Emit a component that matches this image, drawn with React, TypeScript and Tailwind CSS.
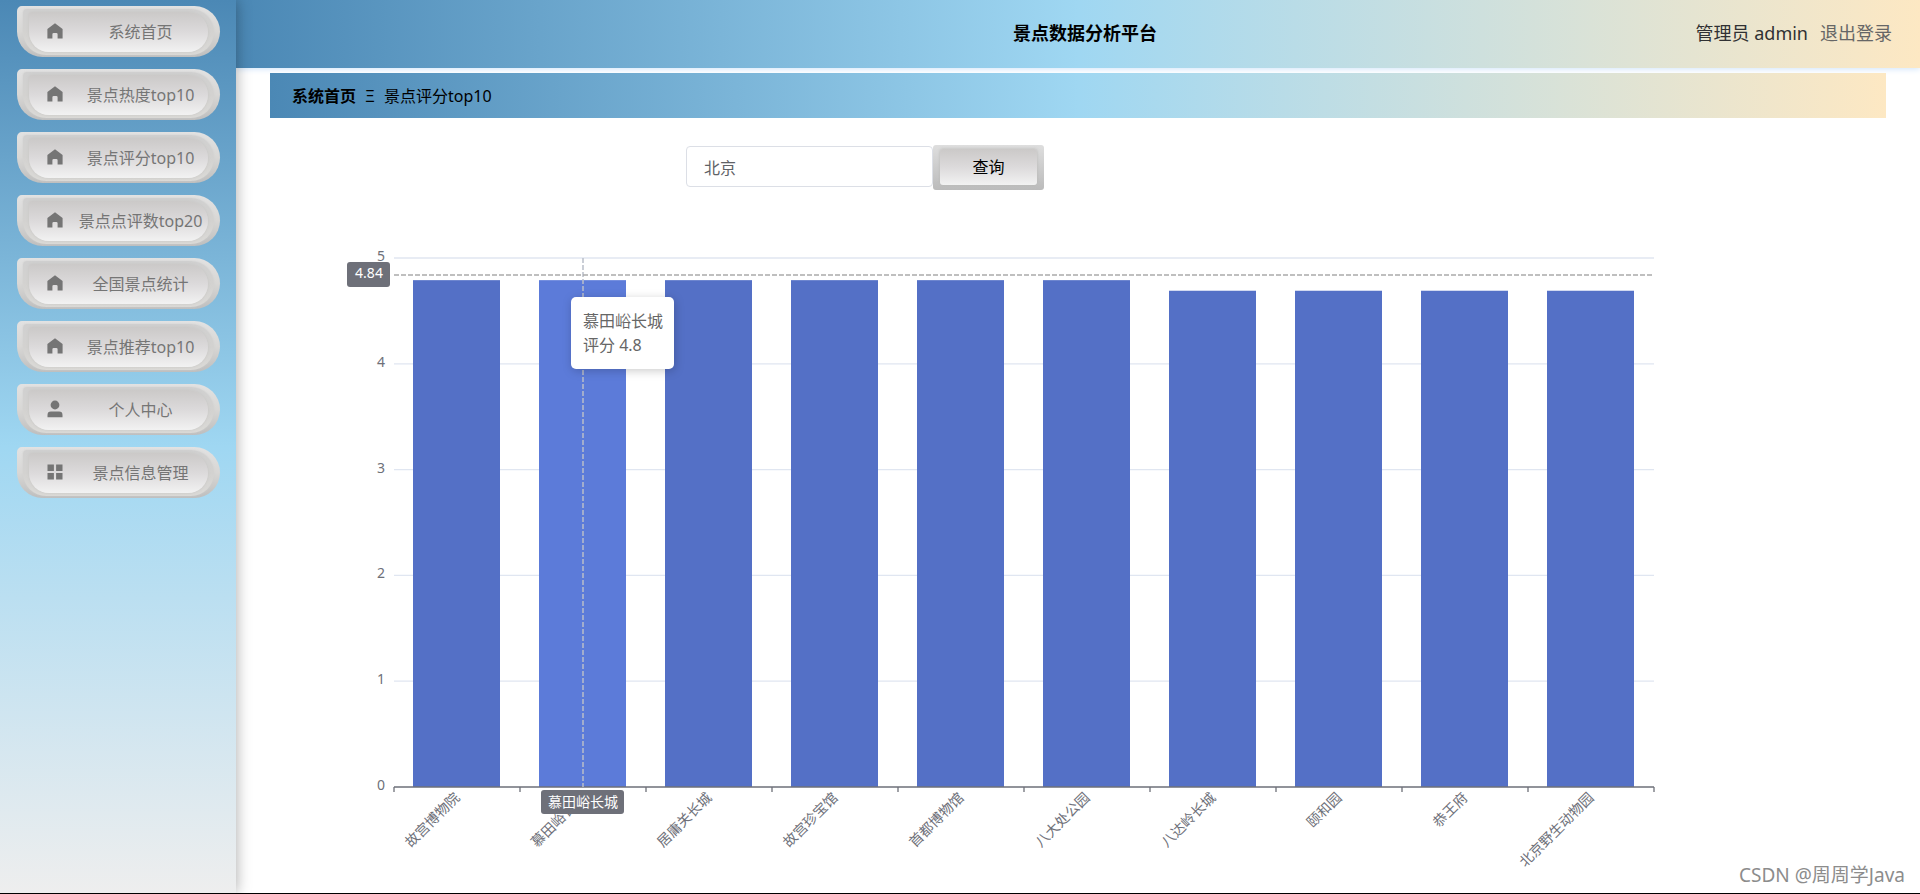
import type { ReactNode } from "react";

type IconName = "home" | "user" | "grid";

const menu: { label: string; icon: IconName }[] = [
  { label: "系统首页", icon: "home" },
  { label: "景点热度top10", icon: "home" },
  { label: "景点评分top10", icon: "home" },
  { label: "景点点评数top20", icon: "home" },
  { label: "全国景点统计", icon: "home" },
  { label: "景点推荐top10", icon: "home" },
  { label: "个人中心", icon: "user" },
  { label: "景点信息管理", icon: "grid" },
];

const spots = [
  { name: "故宫博物院", score: 4.8 },
  { name: "慕田峪长城", score: 4.8 },
  { name: "居庸关长城", score: 4.8 },
  { name: "故宫珍宝馆", score: 4.8 },
  { name: "首都博物馆", score: 4.8 },
  { name: "八大处公园", score: 4.8 },
  { name: "八达岭长城", score: 4.7 },
  { name: "颐和园", score: 4.7 },
  { name: "恭王府", score: 4.7 },
  { name: "北京野生动物园", score: 4.7 },
];

const iconShapes: Record<IconName, ReactNode> = {
  home: <path d="M8 0.2 15.6 6v9.4h-5v-4.2a1.3 1.3 0 0 0-1.3-1.3H6.7a1.3 1.3 0 0 0-1.3 1.3v4.2H0.4V6Z" />,
  user: (
    <>
      <circle cx="8" cy="4" r="4.4" />
      <path d="M0.5 16.2v-2.2A3.4 3.4 0 0 1 3.9 10.6h8.2a3.4 3.4 0 0 1 3.4 3.4v2.2Z" />
    </>
  ),
  grid: <path d="M.5.5h6.4v6.4H.5zM9.1.5h6.4v6.4H9.1zM.5 9.1h6.4v6.4H.5zM9.1 9.1h6.4v6.4H9.1z" />,
};

function MenuItem({ label, icon }: { label: string; icon: IconName }) {
  return (
    <a
      href="#"
      className="flex h-[51px] items-center rounded-[26px] rounded-tl-[5px] bg-linear-to-b from-[#e2e2e2] via-[#d8d7d5] to-[#bebebe] px-[6px] pt-[3px] pb-[2px] text-base text-[#757575]"
    >
      <span className="flex h-full flex-1 items-center rounded-[24px] rounded-tl-[4px] bg-linear-to-b from-[#d0d0d0] via-[#d3d2d0] to-[#dbdad7] px-[6px] py-[3px] shadow-[0_0_2px_#cfcfcd]">
        <span className="flex h-full flex-1 items-center rounded-[22px] rounded-tl-[3px] bg-linear-to-b from-[#cbc9c8] via-[#dcdadb] to-[#f2f2f2] shadow-[0_0_3px_#c6c5c3]">
          <svg viewBox="0 0 16 16" className="mb-[3px] ml-[18px] size-4 shrink-0 overflow-visible" fill="#757575">
            {iconShapes[icon]}
          </svg>
          <span className="flex flex-1 justify-center whitespace-nowrap pl-2.5">{label}</span>
        </span>
      </span>
    </a>
  );
}

const LEFT = 124;
const TOP = 58;
const BASE = 587;
const STEP = 126;
const UNIT = (BASE - TOP) / 5;

function ScoreChart() {
  const right = LEFT + STEP * spots.length;
  const pointerX = LEFT + STEP * 1.5;
  const pointerY = BASE - 4.84 * UNIT;

  return (
    <svg viewBox="0 0 1616 680" className="block w-full" role="img" aria-label="景点评分top10">
      {[0, 1, 2, 3, 4, 5].map((n) => (
        <g key={n}>
          {n > 0 && (
            <line x1={LEFT} x2={right} y1={BASE - n * UNIT} y2={BASE - n * UNIT} stroke="#E0E6F1" strokeWidth="1.3" />
          )}
          <text x={LEFT - 9} y={BASE - n * UNIT + 3} textAnchor="end" fontSize="14" fill="#6E7079">
            {n}
          </text>
        </g>
      ))}

      {spots.map((spot, i) => (
        <rect
          key={spot.name}
          x={LEFT + STEP * i + 19}
          y={BASE - spot.score * UNIT + 1}
          width="87"
          height={spot.score * UNIT - 1}
          fill={i === 1 ? "#5C7BD9" : "#5470C6"}
        />
      ))}

      <path
        d={`M${LEFT} ${BASE}H${right}` + Array.from({ length: 11 }, (_, i) => `M${LEFT + STEP * i} ${BASE}v5`).join("")}
        stroke="#6E7079"
        strokeWidth="1.3"
        fill="none"
      />

      {spots.map((spot, i) => (
        <text
          key={spot.name}
          transform={`translate(${LEFT + STEP * (i + 0.5)} 595) rotate(-45)`}
          dy="5"
          textAnchor="end"
          fontSize="14"
          fill="#6E7079"
        >
          {spot.name}
        </text>
      ))}

      {/* axis pointer */}
      <g stroke="#B9BEC9" strokeWidth="1.5" strokeDasharray="5 2">
        <line x1={pointerX} x2={pointerX} y1={TOP} y2={BASE} />
        <line x1={LEFT} x2={right} y1={pointerY} y2={pointerY} stroke="#AAAAAA" />
      </g>
      <g fontSize="14" textAnchor="middle">
        <rect x="77" y="62" width="43" height="25" rx="3" fill="#6E7079" />
        <text x="99" y="78" fill="#fff">4.84</text>
        <rect x="271" y="590" width="83" height="24" rx="3" fill="#6E7079" />
        <text x={pointerX} y="607" fill="#fff">慕田峪长城</text>
      </g>

      {/* tooltip */}
      <g className="drop-shadow-[1px_2px_5px_rgba(0,0,0,0.2)]">
        <rect x="301" y="97" width="103" height="72" rx="5" fill="#fff" />
      </g>
      <text x="313" y="127" fontSize="16" fill="#666">慕田峪长城</text>
      <text x="313" y="151" fontSize="16" fill="#666">评分 4.8</text>
    </svg>
  );
}

export default function App() {
  return (
    <div className="relative flex min-h-screen border-b border-black bg-white font-['Noto_Sans','Noto_Sans_CJK_SC',sans-serif]">
      <aside className="z-10 w-[236px] shrink-0 bg-linear-to-b from-[#4b88b5] via-[#9fd7f2] to-[#eeeeee] shadow-[0_0_14px_rgba(0,0,0,0.35)]">
        <nav className="flex flex-col gap-3 pt-1.5 pr-4 pl-[17px]">
          {menu.map((item) => (
            <MenuItem key={item.label} {...item} />
          ))}
        </nav>
      </aside>

      <div className="flex min-w-0 flex-1 flex-col">
        <header className="grid h-[68px] grid-cols-[1fr_auto_1fr] items-center bg-linear-to-r from-[#4b88b5] via-[#9fd7f2] to-[#fde8c3] pr-7 pb-0.5 pl-[42px] text-lg shadow-[0_1px_6px_#cfe4fa]">
          <h1 className="col-start-2 font-bold text-black">景点数据分析平台</h1>
          <div className="flex justify-end gap-3 whitespace-nowrap">
            <span className="text-[#303133]">管理员 admin</span>
            <a href="#" className="text-[#666666]">退出登录</a>
          </div>
        </header>

        <main className="flex flex-col px-[34px] pt-[5px]">
          <nav className="flex h-[45px] items-center gap-[9px] bg-linear-to-r from-[#4b88b5] via-[#9fd7f2] to-[#fde8c3] px-[22px] text-base text-black">
            <a href="#" className="font-bold">系统首页</a>
            <span>Ξ</span>
            <span>景点评分top10</span>
          </nav>

          <form className="mt-[27px] flex items-start pl-[416px]" onSubmit={(e) => e.preventDefault()}>
            <input
              aria-label="城市"
              defaultValue="北京"
              className="mt-px h-[41px] w-[247px] rounded-[4px] border border-[#dcdfe6] bg-white px-[17px] text-base text-[#606266] outline-none"
            />
            <button
              type="submit"
              className="h-[45px] w-[111px] rounded-[3px] bg-linear-to-b from-[#dedede] to-[#bbbbbb] px-[7px] pt-[4px] pb-[5px] text-base text-black"
            >
              <span className="flex h-full items-center justify-center rounded-[3px] bg-linear-to-b from-[#cbc9c8] via-[#dcdadb] to-[#f2f2f2] shadow-[0_0_3px_#b8b7b5]">
                查询
              </span>
            </button>
          </form>

          <div className="mt-2.5">
            <ScoreChart />
          </div>
        </main>
      </div>

      <span className="absolute right-[15px] bottom-1 text-[19px] leading-7 text-[#8c8c8c] [text-shadow:1px_1px_1px_#ffffff]">CSDN @周周学Java</span>
    </div>
  );
}
